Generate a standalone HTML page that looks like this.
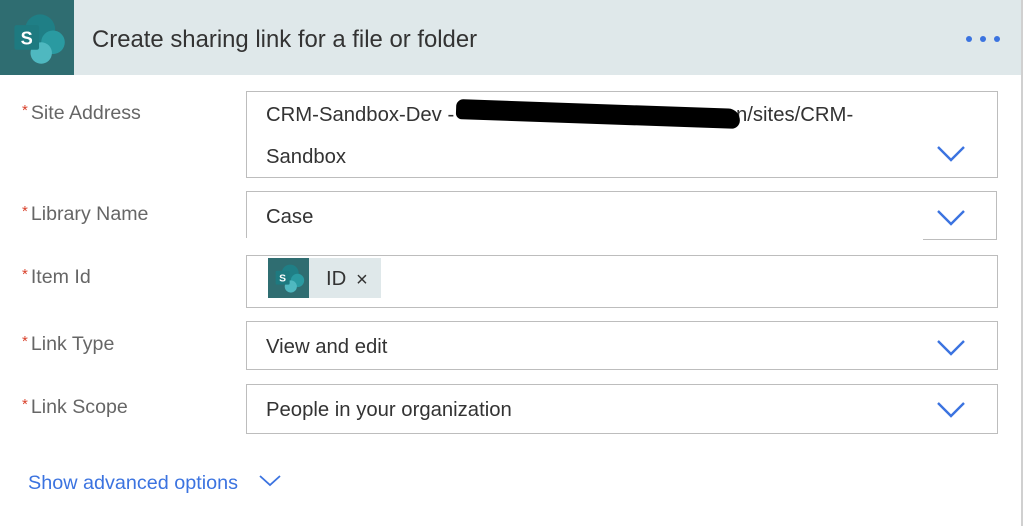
<!DOCTYPE html>
<html><head><style>
body{margin:0;width:1024px;height:526px;background:#fff;font-family:"Liberation Sans",sans-serif;position:relative;overflow:hidden}
.a{position:absolute}
.hdr{left:0;top:0;width:1021px;height:75px;background:#dfe8ea}
.vl{left:1021px;top:0;width:2px;height:526px;background:#d0d0d0}
.lbl{left:22px;font-size:19.6px;color:#666}
.lbl b{color:#d9412b;font-weight:normal;font-size:15px;vertical-align:top;margin-right:3px}
.box{left:246px;width:750px;border:1px solid #bdbdbd;background:#fff}
.t{font-size:20.3px;color:#333;left:266px}
.chev{position:absolute}
</style></head><body>
<div class="a hdr"></div>
<div class="a" style="left:0;top:0;width:74px;height:75px;background:#2f6d71"></div>
<svg class="a" style="left:8px;top:8px" width="60" height="60" viewBox="0 0 56 56">
<circle cx="30" cy="20" r="14" fill="#1f7f86"/>
<circle cx="42" cy="32" r="11" fill="#2a9aa1"/>
<circle cx="31" cy="42" r="10" fill="#4fb8c0"/>
<rect x="6" y="16" width="23" height="23" rx="2" fill="#1e7a80"/>
<text x="17.5" y="34" font-size="17" font-weight="bold" fill="#fff" text-anchor="middle" font-family="Liberation Sans">S</text>
</svg>
<div class="a" style="left:92px;top:26px;font-size:23.9px;color:#333">Create sharing link for a file or folder</div>
<div class="a" style="left:966px;top:36px;width:6px;height:6px;border-radius:50%;background:#3b73e0;box-shadow:14px 0 0 #3b73e0,28px 0 0 #3b73e0"></div>
<div class="a vl"></div>

<div class="a lbl" style="top:102px"><b>*</b>Site Address</div>
<div class="a lbl" style="top:203px"><b>*</b>Library Name</div>
<div class="a lbl" style="top:266px"><b>*</b>Item Id</div>
<div class="a lbl" style="top:333px"><b>*</b>Link Type</div>
<div class="a lbl" style="top:396px"><b>*</b>Link Scope</div>

<div class="a box" style="top:91px;height:85px"></div>
<div class="a t" style="top:104px">CRM-Sandbox-Dev -</div>
<div class="a t" style="top:104px;left:736px">n/sites/CRM-</div>
<div class="a" style="left:456px;top:104px;width:284px;height:20px;background:#000;border-radius:12px 20px 14px 10px;transform:rotate(2deg)"></div>
<div class="a t" style="top:146px">Sandbox</div>

<div class="a" style="left:246px;top:191px;width:750px;height:48px;border-top:1px solid #bdbdbd;border-right:1px solid #bdbdbd"></div>
<div class="a" style="left:246px;top:191px;width:1px;height:47px;background:#bdbdbd"></div>
<div class="a" style="left:923px;top:239px;width:74px;height:1px;background:#bdbdbd"></div>
<div class="a t" style="top:206px">Case</div>

<div class="a box" style="top:255px;height:51px"></div>
<div class="a" style="left:268px;top:258px;width:113px;height:40px;background:#dfe8ea"></div>
<div class="a" style="left:268px;top:258px;width:41px;height:40px;background:#2f6d71"></div>
<svg class="a" style="left:272px;top:261px" width="34" height="34" viewBox="0 0 56 56">
<circle cx="30" cy="20" r="14" fill="#1f7f86"/><circle cx="42" cy="32" r="11" fill="#2a9aa1"/><circle cx="31" cy="42" r="10" fill="#4fb8c0"/>
<rect x="6" y="16" width="23" height="23" rx="2" fill="#1e7a80"/>
<text x="17.5" y="34" font-size="17" font-weight="bold" fill="#fff" text-anchor="middle" font-family="Liberation Sans">S</text></svg>
<div class="a" style="left:326px;top:268px;font-size:20.3px;color:#333">ID</div>
<div class="a" style="left:356px;top:269px;font-size:20.3px;color:#333">×</div>

<div class="a box" style="top:321px;height:47px"></div>
<div class="a t" style="top:336px">View and edit</div>
<div class="a box" style="top:384px;height:48px"></div>
<div class="a t" style="top:399px">People in your organization</div>

<svg class="chev" style="left:936px;top:145px" width="30" height="18"><path d="M2 2 L15 15 L28 2" fill="none" stroke="#3b73e0" stroke-width="2.4"/></svg>
<svg class="chev" style="left:936px;top:209px" width="30" height="18"><path d="M2 2 L15 15 L28 2" fill="none" stroke="#3b73e0" stroke-width="2.4"/></svg>
<svg class="chev" style="left:936px;top:339px" width="30" height="18"><path d="M2 2 L15 15 L28 2" fill="none" stroke="#3b73e0" stroke-width="2.4"/></svg>
<svg class="chev" style="left:936px;top:401px" width="30" height="18"><path d="M2 2 L15 15 L28 2" fill="none" stroke="#3b73e0" stroke-width="2.4"/></svg>

<div class="a" style="left:28px;top:472px;font-size:19.8px;color:#3b73e0">Show advanced options</div>
<svg class="chev" style="left:258px;top:474px" width="24" height="14"><path d="M2 2 L12 11 L22 2" fill="none" stroke="#3b73e0" stroke-width="1.8"/></svg>
</body></html>
